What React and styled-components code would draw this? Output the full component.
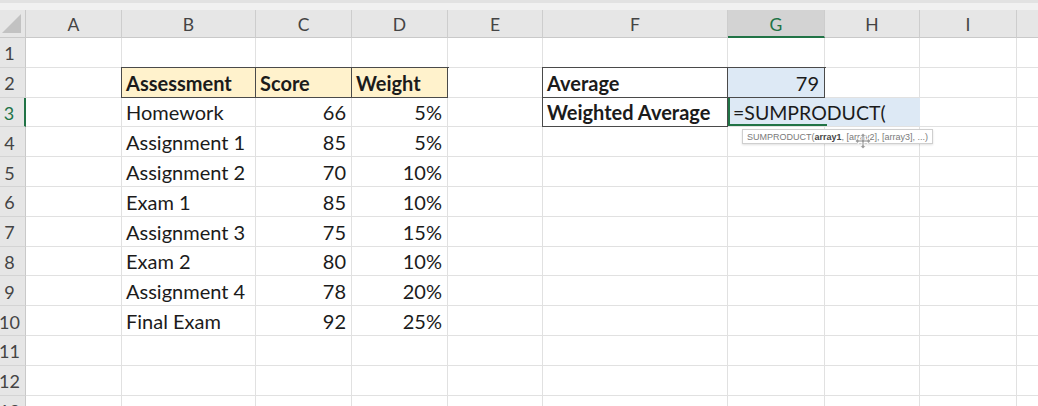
import React from "react";
import styled, { createGlobalStyle } from "styled-components";

const GlobalStyle = createGlobalStyle`
  body {
    margin: 0;
    background: #fff;
    font-family: Lato, "Liberation Sans", sans-serif;
  }
`;

const GREEN = "#217346";
const ROW_H = 29.8;

const columns = [
  { id: "A", w: 96 },
  { id: "B", w: 134 },
  { id: "C", w: 96 },
  { id: "D", w: 96 },
  { id: "E", w: 95 },
  { id: "F", w: 185 },
  { id: "G", w: 97 },
  { id: "H", w: 95 },
  { id: "I", w: 97 },
  { id: "J", w: 60 },
];

const yellow = "#fff2cc";
const blue = "#dde9f5";

// row -> col -> cell
const sheet = {
  2: {
    B: { text: "Assessment", bold: true, fill: yellow, box: true },
    C: { text: "Score", bold: true, fill: yellow, box: true },
    D: { text: "Weight", bold: true, fill: yellow, box: true },
    F: { text: "Average", bold: true, box: true },
    G: { text: "79", right: true, fill: blue, box: true },
  },
  3: {
    F: { text: "Weighted Average", bold: true, box: true },
    G: { edit: "=SUMPRODUCT(" },
  },
};

const rows = [
  ["Homework", "66", "5%"],
  ["Assignment 1", "85", "5%"],
  ["Assignment 2", "70", "10%"],
  ["Exam 1", "85", "10%"],
  ["Assignment 3", "75", "15%"],
  ["Exam 2", "80", "10%"],
  ["Assignment 4", "78", "20%"],
  ["Final Exam", "92", "25%"],
];
rows.forEach(([name, score, weight], i) => {
  const r = i + 3;
  sheet[r] = sheet[r] || {};
  sheet[r].B = { text: name };
  sheet[r].C = { text: score, right: true };
  sheet[r].D = { text: weight, right: true };
});

const Page = styled.div`
  width: 1038px;
  height: 406px;
  overflow: hidden;
  background: #fff;
`;

const TopStrip = styled.div`
  height: 10px;
  background: #f1f1f1;
  border-top: 3px solid #e2e2e2;
  box-sizing: border-box;
`;

const Grid = styled.div`
  display: grid;
  grid-template-columns: 26px ${columns.map((c) => c.w + "px").join(" ")};
  grid-template-rows: 28px repeat(13, ${ROW_H}px);
  width: max-content;
`;

const Corner = styled.div`
  position: relative;
  background: #e6e6e6;
  border-right: 1px solid #c9c9c9;
  border-bottom: 1px solid #c9c9c9;
  box-sizing: border-box;

  &::after {
    content: "";
    position: absolute;
    right: 4px;
    bottom: 4px;
    width: 0;
    height: 0;
    border-left: 19px solid transparent;
    border-bottom: 19px solid #c2c2c2;
  }
`;

const ColHead = styled.div`
  display: flex;
  align-items: center;
  justify-content: center;
  box-sizing: border-box;
  background: ${({ $active }) => ($active ? "#d3d3d3" : "#e6e6e6")};
  color: ${({ $active }) => ($active ? GREEN : "#444")};
  font-size: 17.5px;
  border-right: 1px solid #cdcdcd;
  border-bottom: ${({ $active }) => ($active ? `2px solid ${GREEN}` : "1px solid #c9c9c9")};
  padding-top: 2px;
`;

const RowHead = styled.div`
  display: flex;
  align-items: center;
  justify-content: center;
  box-sizing: border-box;
  padding: 2px 6px 0 0;
  background: #e6e6e6;
  color: ${({ $active }) => ($active ? GREEN : "#444")};
  font-size: 18px;
  border-bottom: 1px solid #d4d4d4;
  border-right: ${({ $active }) => ($active ? `2px solid ${GREEN}` : "1px solid #c9c9c9")};
`;

const Cell = styled.div`
  position: relative;
  display: flex;
  align-items: center;
  justify-content: ${({ $right }) => ($right ? "flex-end" : "flex-start")};
  box-sizing: border-box;
  padding: 1px 5px 0 4px;
  background: ${({ $fill }) => $fill || "#fff"};
  color: #1b1b1b;
  font-size: 20px;
  font-weight: ${({ $bold }) => ($bold ? 700 : 400)};
  white-space: nowrap;
  border-right: 1px solid ${({ $box }) => ($box ? "#4a4a4a" : "#e1e1e1")};
  border-bottom: 1px solid ${({ $box }) => ($box ? "#4a4a4a" : "#e1e1e1")};
  box-shadow: ${({ $box }) => ($box ? "0 0 0 1px #4a4a4a" : "none")};
`;

const EditBox = styled.div`
  position: absolute;
  left: 0;
  top: 0;
  z-index: 3;
  width: 192px;
  height: 100%;
  box-sizing: border-box;
  display: flex;
  align-items: center;
  padding: 1px 0 0 3px;
  background: ${blue};
  border-left: 2px solid ${GREEN};
  color: #1b1b1b;
  font-size: 19.5px;

  &::after {
    content: "";
    position: absolute;
    left: -2px;
    bottom: 0;
    width: 99px;
    height: 2px;
    background: ${GREEN};
  }
`;

const Tooltip = styled.div`
  position: absolute;
  z-index: 4;
  left: 14px;
  top: calc(100% + 3px);
  height: 15px;
  box-sizing: border-box;
  padding: 0 4px;
  display: flex;
  align-items: center;
  background: #fff;
  border: 1px solid #cfcfcf;
  box-shadow: 0 1px 2px rgba(0, 0, 0, 0.12);
  font-family: "Liberation Sans", Arial, sans-serif;
  font-size: 9px;
  color: #7a7a7a;
  white-space: nowrap;

  b {
    color: #444;
  }
`;

const MoveCursor = styled.svg`
  position: absolute;
  z-index: 5;
  left: 126px;
  top: 34px;
`;

function CursorIcon() {
  return (
    <MoveCursor width="18" height="18" viewBox="0 0 18 18">
      <g fill="#9a9a9a" stroke="#fff" strokeWidth="0.8">
        <path d="M9 1 L12 4.5 L10 4.5 L10 8 L13.5 8 L13.5 6 L17 9 L13.5 12 L13.5 10 L10 10 L10 13.5 L12 13.5 L9 17 L6 13.5 L8 13.5 L8 10 L4.5 10 L4.5 12 L1 9 L4.5 6 L4.5 8 L8 8 L8 4.5 L6 4.5 Z" />
      </g>
    </MoveCursor>
  );
}

function SheetCell({ row, col }) {
  const c = (sheet[row] && sheet[row][col]) || {};
  if (c.edit) {
    return (
      <Cell>
        <EditBox>{c.edit}</EditBox>
        <Tooltip>
          SUMPRODUCT(<b>array1</b>, [array2], [array3], ...)
        </Tooltip>
        <CursorIcon />
      </Cell>
    );
  }
  return (
    <Cell $right={c.right} $bold={c.bold} $fill={c.fill} $box={c.box}>
      {c.text}
    </Cell>
  );
}

export default function App() {
  const rowNums = Array.from({ length: 13 }, (_, i) => i + 1);
  return (
    <Page>
      <GlobalStyle />
      <TopStrip />
      <Grid>
        <Corner />
        {columns.map((c) => (
          <ColHead key={c.id} $active={c.id === "G"}>
            {c.id === "J" ? "" : c.id}
          </ColHead>
        ))}
        {rowNums.map((r) => (
          <React.Fragment key={r}>
            <RowHead $active={r === 3}>{r}</RowHead>
            {columns.map((c) => (
              <SheetCell key={c.id} row={r} col={c.id} />
            ))}
          </React.Fragment>
        ))}
      </Grid>
    </Page>
  );
}
